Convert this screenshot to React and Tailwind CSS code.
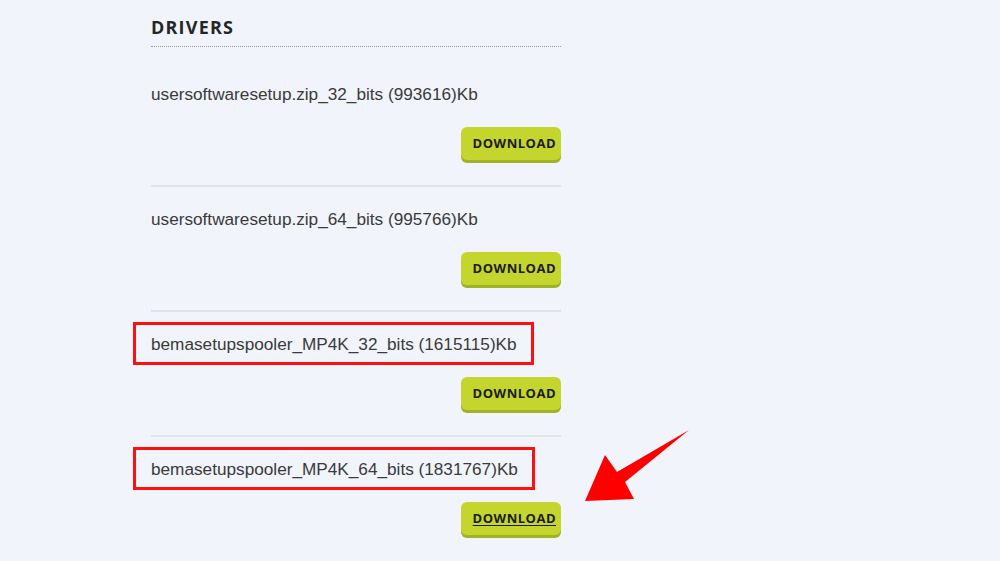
import React from "react";

const drivers = [
  { name: "usersoftwaresetup.zip_32_bits (993616)Kb" },
  { name: "usersoftwaresetup.zip_64_bits (995766)Kb" },
  { name: "bemasetupspooler_MP4K_32_bits (1615115)Kb", marked: true },
  { name: "bemasetupspooler_MP4K_64_bits (1831767)Kb", marked: true, hover: true },
];

function DownloadButton({ hover }) {
  return (
    <button
      className={
        "flex h-[33px] w-[100px] items-center justify-end rounded-[6px] bg-[#c4d62e] pr-[5px] text-[13px] font-bold tracking-[0.5px] text-[#1b1b1b] shadow-[0_3px_0_#a0b225] " +
        (hover ? "underline underline-offset-2" : "")
      }
      style={{ fontFamily: '"Open Sans", sans-serif' }}
    >
      DOWNLOAD
    </button>
  );
}

export default function App() {
  return (
    <div className="relative h-[561px] w-[1000px] overflow-hidden bg-[#f1f4fb]">
      <section className="ml-[151px] w-[410px] pt-[15px]">
        <h2
          className="border-b border-dotted border-[#9a9a9a] pb-[7px] text-[18px] font-bold leading-[24px] tracking-[1.2px] text-[#262626]"
          style={{ fontFamily: '"Open Sans", sans-serif' }}
        >
          DRIVERS
        </h2>
        <div className="mt-[15px]">
          {drivers.map((d, i) => (
            <div
              key={d.name}
              className={
                "pt-[22px] pb-[25px] " +
                (i < drivers.length - 1 ? "border-b-2 border-[#dfe3ea]" : "")
              }
            >
              <p
                className="text-[17.2px] leading-[21px] text-[#3a3a3a]"
                style={{ fontFamily: '"Liberation Sans", Arial, sans-serif' }}
              >
                <span className="relative inline-block">
                  {d.name}
                  {d.marked ? (
                    <span className="pointer-events-none absolute -top-[12px] -bottom-[10px] -left-[18px] -right-[17px] border-[3px] border-[#ff1010]" />
                  ) : null}
                </span>
              </p>
              <div className="mt-[22px] flex justify-end">
                <DownloadButton hover={d.hover} />
              </div>
            </div>
          ))}
        </div>
      </section>
      <svg
        className="pointer-events-none absolute left-0 top-0"
        width="1000"
        height="561"
        viewBox="0 0 1000 561"
      >
        <polygon
          points="689,430 617,472 605,455 585,501 634,499 625,482"
          fill="#ff0000"
        />
      </svg>
    </div>
  );
}
